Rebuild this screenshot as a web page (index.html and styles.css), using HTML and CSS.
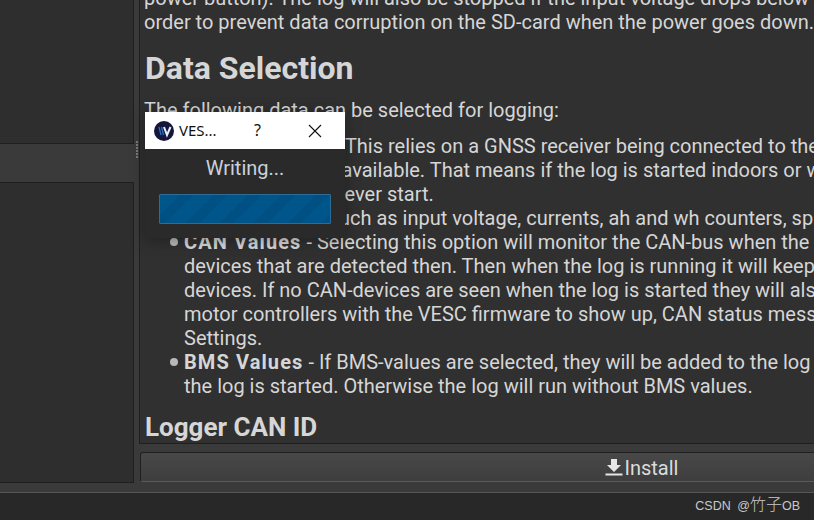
FILE: index.html
```html
<!DOCTYPE html>
<html lang="en">
<head>
<meta charset="utf-8">
<title>VESC Tool</title>
<link rel="stylesheet" href="styles.css">
</head>
<body>
<div class="app">
  <div class="workspace">
    <aside class="side">
      <div class="panel panel-top"></div>
      <div class="panel panel-bottom"></div>
    </aside>
    <div class="splitter"><div class="grip"></div></div>
    <main class="main">
      <div class="doc">
        <div class="doc-inner">
          <p class="para">power button). The log will also be stopped if the input voltage drops below a certain level in<br>order to prevent data corruption on the SD-card when the power goes down.</p>
          <h2 class="h-big">Data Selection</h2>
          <p class="para">The following data can be selected for logging:</p>
          <ul class="list">
            <li><b>GNSS Position</b> - This relies on a GNSS receiver being connected to the<br>logger and signal available. That means if the log is started indoors or w<br>with no fix it can never start.</li>
            <li><b>Local Values</b> - Such as input voltage, currents, ah and wh counters, sp</li>
            <li><b>CAN Values</b> - Selecting this option will monitor the CAN-bus when the log is started and<br>devices that are detected then. Then when the log is running it will keep<br>devices. If no CAN-devices are seen when the log is started they will also<br>motor controllers with the VESC firmware to show up, CAN status messages<br>Settings.</li>
            <li><b>BMS Values</b> - If BMS-values are selected, they will be added to the log if<br>the log is started. Otherwise the log will run without BMS values.</li>
          </ul>
          <h3 class="h-small">Logger CAN ID</h3>
        </div>
      </div>
      <button class="install">
        <svg class="install-icon" width="18" height="17" viewBox="0 0 18 17"><path d="M6 0h6v6h4l-7 7-7-7h4z" fill="#e6e6e6"/><rect x="0.5" y="14.5" width="17" height="2" fill="#e6e6e6"/></svg>
        <span>Install</span>
      </button>
    </main>
  </div>
  <footer class="status"><span class="mark">CSDN @<span class="mark-cjk">竹子</span>OB</span></footer>
</div>
<div class="dialog">
  <div class="titlebar">
    <svg class="logo" width="20" height="20" viewBox="0 0 20 20">
      <circle cx="10" cy="10" r="10" fill="#14163c"/>
      <path d="M5 6l2 8M7.500 6l2 8" stroke="#2f6fc4" stroke-width="1.300" fill="none"/>
      <path d="M10 6l3 8 3.500-8" stroke="#e8f0ff" stroke-width="2" fill="none"/>
    </svg>
    <span class="title-text">VES...</span>
    <span class="help">?</span>
    <svg class="close" width="14" height="14" viewBox="0 0 14 14"><path d="M1 1l12 12M13 1L1 13" stroke="#111" stroke-width="1.100"/></svg>
  </div>
  <div class="dialog-body">
    <div class="writing">Writing...</div>
    <div class="progress"></div>
  </div>
</div>
</body>
</html>
```
FILE: styles.css
```css
html, body {
  margin: 0;
  padding: 0;
  height: 100%;
  overflow: hidden;
  background: #3a3a3a;
  font-family: Roboto, "Noto Sans", sans-serif;
}
.app {
  width: 814px;
  height: 520px;
  display: flex;
  flex-direction: column;
  position: relative;
}
.workspace {
  height: 492px;
  display: flex;
  overflow: hidden;
}
.side {
  width: 134px;
  flex: none;
  display: flex;
  flex-direction: column;
  height: 483px;
  justify-content: space-between;
}
.panel {
  background: #2e2e2e;
  border-right: 1px solid #1f1f1f;
  box-sizing: border-box;
}
.panel-top {
  height: 144px;
  border-bottom: 1px solid #1f1f1f;
}
.panel-bottom {
  height: 301px;
  border-top: 1px solid #1f1f1f;
  border-bottom: 1px solid #1f1f1f;
}
.splitter {
  width: 5px;
  flex: none;
  display: flex;
  align-items: flex-start;
  justify-content: center;
}
.grip {
  margin-top: 141px;
  width: 2px;
  height: 17px;
  background: repeating-linear-gradient(to bottom, #7a7a7a 0 2px, #3a3a3a 2px 3px);
}
.main {
  flex: 1;
  min-width: 0;
  display: flex;
  flex-direction: column;
}
.doc {
  height: 445px;
  background: #303030;
  border-left: 1px solid #1f1f1f;
  border-bottom: 1px solid #1f1f1f;
  box-sizing: border-box;
  overflow: hidden;
}
.doc-inner {
  margin-top: -14px;
  padding-left: 4px;
  width: 900px;
  color: #d6d6d6;
  font-size: 20px;
  line-height: 24px;
}
.para {
  margin: 0;
  white-space: nowrap;
}
.h-big {
  margin: 14px 0 10px;
  padding-left: 1px;
  font-size: 32px;
  line-height: 40px;
  font-weight: 700;
}
.list {
  margin: 12px 0 0;
  padding: 0 0 0 40px;
  white-space: nowrap;
  list-style: none;
}
.list li {
  position: relative;
}
.list li::before {
  content: "";
  position: absolute;
  left: -14px;
  top: 8px;
  width: 8px;
  height: 8px;
  border-radius: 50%;
  background: #b8b8b8;
}
.list b {
  letter-spacing: 1.1px;
}
.h-small {
  margin: 13px 0 0;
  padding-left: 1px;
  font-size: 26px;
  line-height: 32px;
  font-weight: 700;
}
.install {
  margin: 8px 0 10px 1px;
  height: 30px;
  width: 1003px;
  flex: none;
  box-sizing: border-box;
  border: 1px solid #1f1f1f;
  border-bottom-color: #5a5a5a;
  border-radius: 3px;
  outline: none;
  background: linear-gradient(to bottom, #484848, #3e3e3e);
  color: #dcdcdc;
  font-family: Roboto, sans-serif;
  font-size: 20px;
  display: flex;
  align-items: center;
  justify-content: center;
  gap: 2px;
  padding: 1px 0 0;
  position: relative;
}
.install-icon {
  flex: none;
}
.status {
  flex: 1;
  background: #282828;
  border-top: 1px solid #555;
  display: flex;
  justify-content: flex-end;
  align-items: flex-start;
  padding-right: 14px;
}
.mark {
  margin-top: 0;
  color: #c8c8c8;
  font-size: 12.500px;
  line-height: 20px;
  word-spacing: 3px;
  font-family: "Liberation Sans", "Noto Sans CJK SC", sans-serif;
}
.mark-cjk {
  font-size: 16px;
  font-family: "Noto Sans CJK SC", sans-serif;
  font-weight: 300;
}
.dialog {
  position: absolute;
  left: 145px;
  top: 112px;
  width: 200px;
  height: 126px;
  background: #2a2a2a;
  box-shadow: 0 2px 14px rgba(0, 0, 0, 0.35);
  display: flex;
  flex-direction: column;
}
.titlebar {
  height: 37px;
  background: #fff;
  display: flex;
  align-items: center;
  padding-left: 9px;
  color: #111;
  font-family: "Noto Sans", sans-serif;
  font-size: 15px;
  position: relative;
}
.logo {
  flex: none;
}
.title-text {
  margin: -2px 0 0 5px;
  width: 75px;
}
.help {
  margin-top: -2px;
  width: 16px;
  font-size: 16px;
}
.close {
  margin-left: 38px;
}
.dialog-body {
  flex: 1;
  display: flex;
  flex-direction: column;
  align-items: center;
}
.writing {
  margin-top: 7px;
  font-size: 20px;
  line-height: 24px;
  color: #c8d2dc;
}
.progress {
  margin-top: 14px;
  width: 172px;
  height: 30px;
  box-sizing: border-box;
  border: 1px solid #2d6c97;
  border-radius: 1px;
  background: repeating-linear-gradient(135deg, #00558a 0 14px, #005084 14px 24px);
}
```
